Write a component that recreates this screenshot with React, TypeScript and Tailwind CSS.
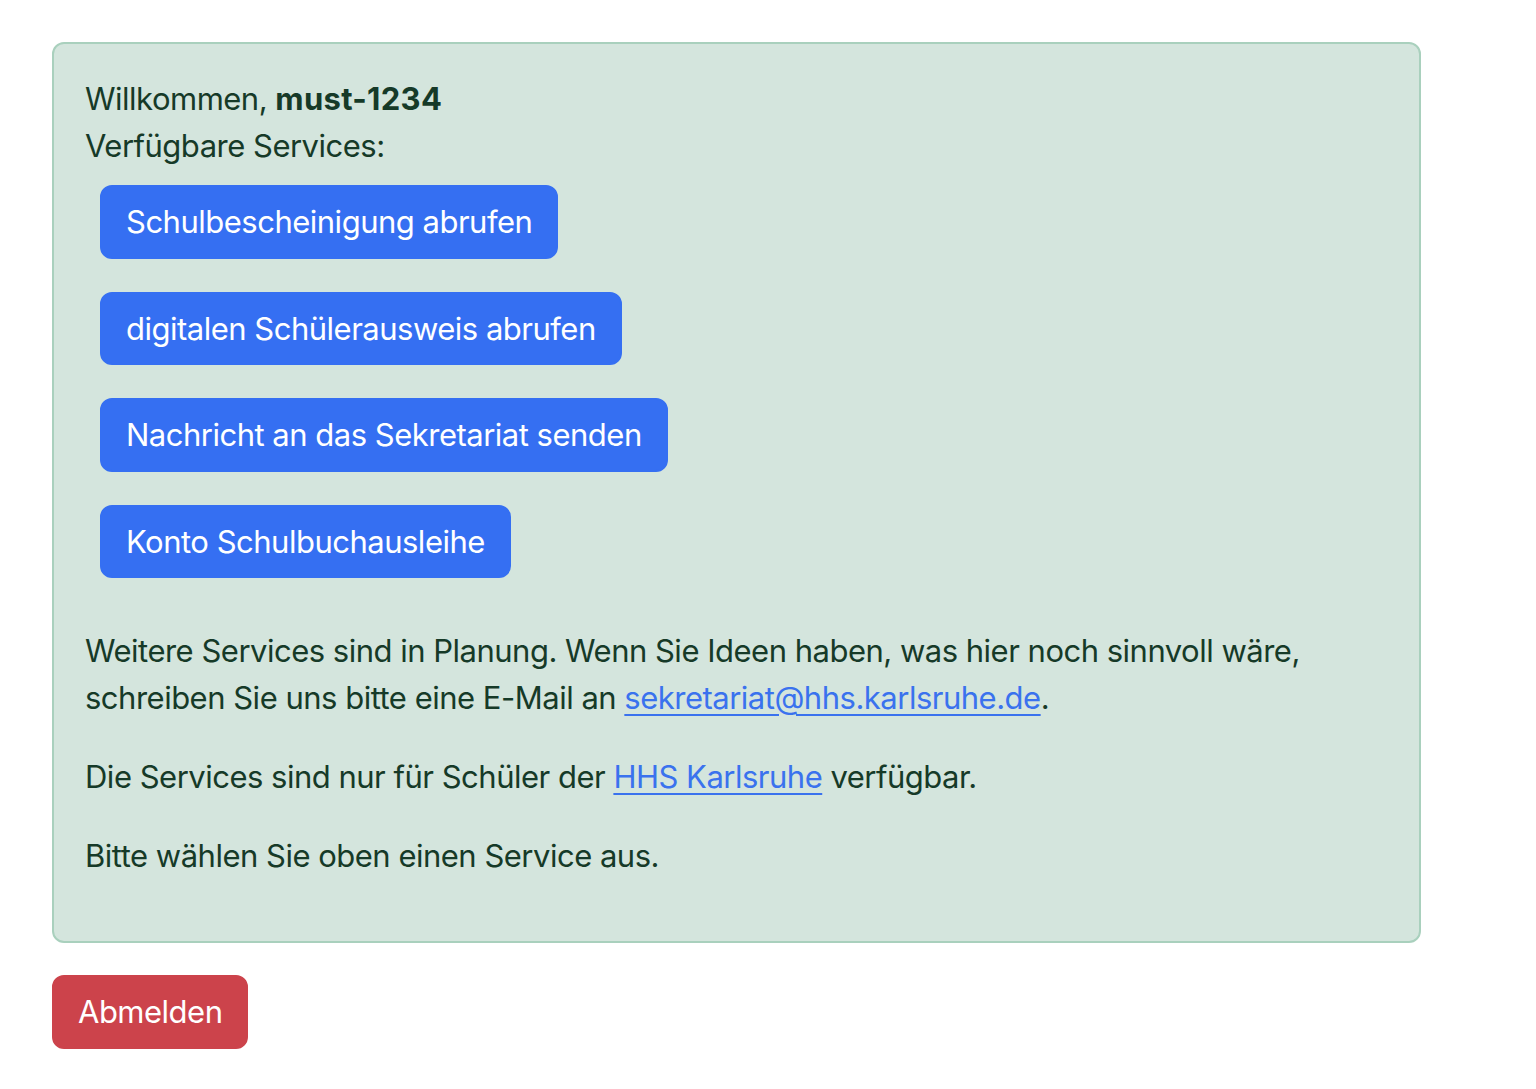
const services = [
  'Schulbescheinigung abrufen',
  'digitalen Schülerausweis abrufen',
  'Nachricht an das Sekretariat senden',
  'Konto Schulbuchausleihe',
];

export default function App() {
  return (
    <div
      className="min-h-screen bg-white pl-[52px] pr-[115px] pt-[42px] text-[31px] leading-[47px] tracking-[-0.5px] text-[#163a28]"
      style={{ fontFamily: 'Inter, "Noto Sans", "Liberation Sans", sans-serif' }}
    >
      <div className="rounded-[12px] border-2 border-[#a9d0bd] bg-[#d4e5dd] px-[31px] pb-[30px] pt-[31px]">
        <div>
          Willkommen, <b className="font-bold tracking-[0.3px]">must-1234</b>
        </div>
        <div>Verfügbare Services:</div>

        <div className="ml-[15px] mt-[16px] flex flex-col items-start gap-[33px]">
          {services.map((label) => (
            <button
              key={label}
              type="button"
              className="rounded-[12px] border-2 border-[#356ff2] bg-[#356ff2] px-[24px] py-[11.25px] text-white"
            >
              {label}
            </button>
          ))}
        </div>

        <p className="mb-[32px] mt-[49px]">
          Weitere Services sind in Planung. Wenn Sie Ideen haben, was hier noch sinnvoll wäre,
          schreiben Sie uns bitte eine E-Mail an{' '}
          <a href="#" className="text-[#3a72ee] underline decoration-[1.5px] underline-offset-[5px]">
            sekretariat@hhs.karlsruhe.de
          </a>
          .
        </p>
        <p className="mb-[32px]">
          Die Services sind nur für Schüler der{' '}
          <a href="#" className="text-[#3a72ee] underline decoration-[1.5px] underline-offset-[5px]">
            HHS Karlsruhe
          </a>{' '}
          verfügbar.
        </p>
        <p className="mb-[32px]">Bitte wählen Sie oben einen Service aus.</p>
      </div>

      <button
        type="button"
        className="mt-[32px] rounded-[12px] border-2 border-[#cc434b] bg-[#cc434b] px-[24px] py-[11.25px] text-white"
      >
        Abmelden
      </button>
    </div>
  );
}
